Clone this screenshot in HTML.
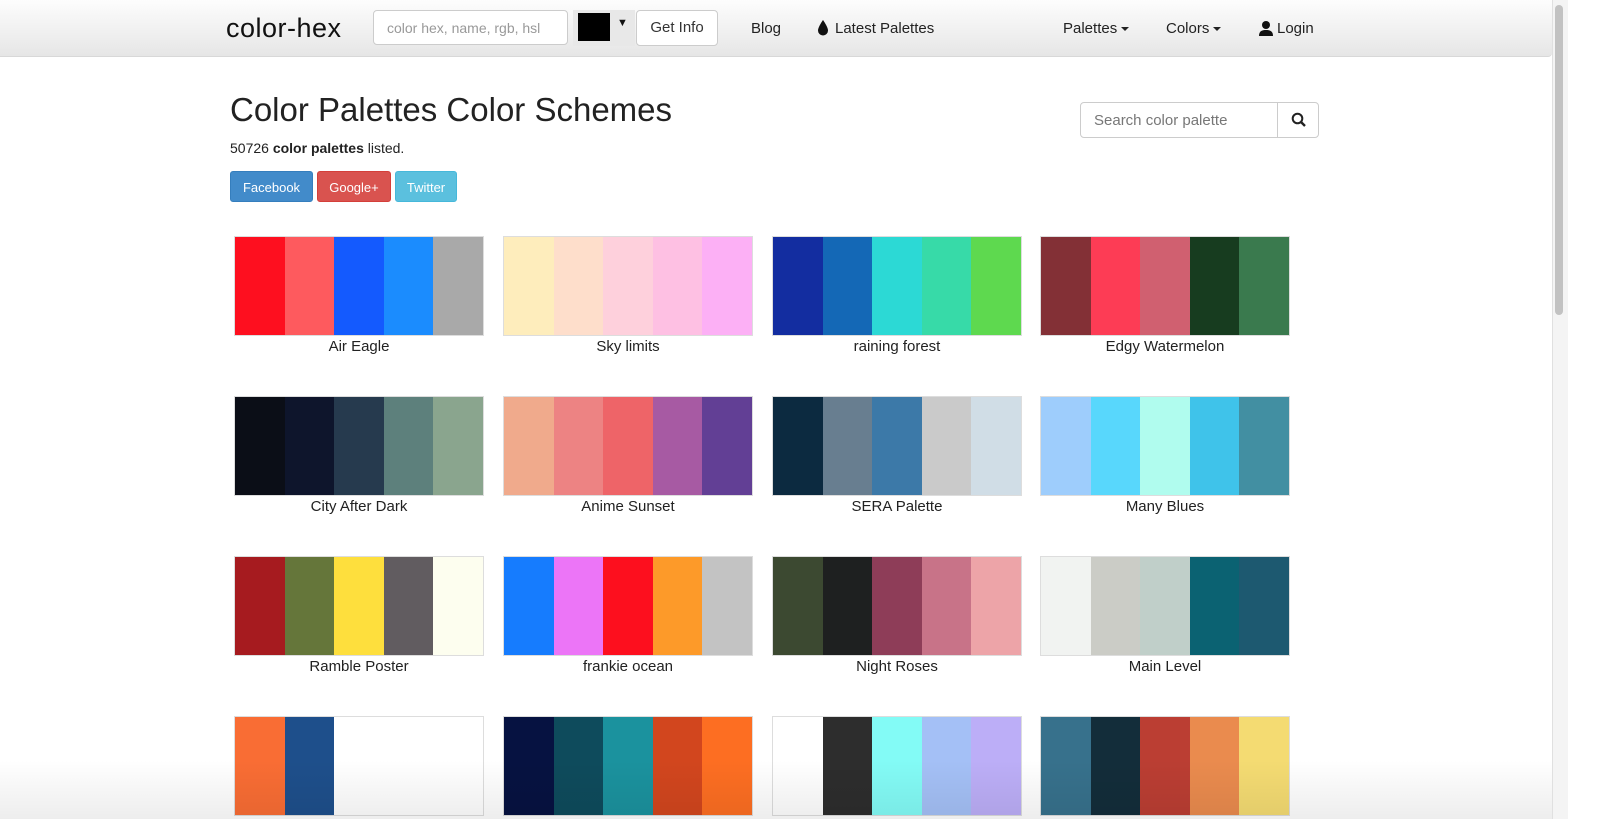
<!DOCTYPE html><html><head><meta charset="utf-8"><style>
body{margin:0;width:1600px;height:819px;overflow:hidden;background:#fff;font-family:"Liberation Sans",sans-serif;color:#333;position:relative}
.nav{position:absolute;left:0;top:0;width:1552px;height:56px;background:linear-gradient(#fdfdfd,#e6e6e6);border-bottom:1px solid #d8d8d8;border-radius:0 0 4px 0}
.abs{position:absolute}
.logo{left:226px;top:13px;font-size:27px;color:#111;letter-spacing:0.5px}
.inp{left:373px;top:10px;width:195px;height:35px;border:1px solid #ccc;border-radius:4px;background:#fff;box-sizing:border-box;font-size:14px;color:#999;padding:9px 13px}
.sw{left:578px;top:13px;width:32px;height:28px;background:#000}
.btn{left:636px;top:10px;width:82px;height:36px;border:1px solid #ccc;border-radius:4px;background:#fff;box-sizing:border-box;font-size:15px;color:#333;text-align:center;line-height:34px}
.nl{font-size:15px;color:#222;top:20px}
.car{display:inline-block;width:0;height:0;border-left:4px solid transparent;border-right:4px solid transparent;border-top:4px solid #222;vertical-align:middle;margin-left:4px}
.scroll{left:1552px;top:0;width:16px;height:819px;background:#f4f4f4;border-left:1px solid #e0e0e0}
.thumb{left:1555px;top:5px;width:8px;height:310px;background:#c2c2c2;border-radius:4px}
.edge{left:1568px;top:0;width:32px;height:819px;background:#fff}
h1{position:absolute;left:230px;top:91px;margin:0;font-weight:300;font-size:33px;color:#222}
.cnt{left:230px;top:140px;font-size:14px;color:#222}
.sb{top:171px;height:31px;border-radius:3px;color:#fff;font-size:13px;line-height:31px;text-align:center;box-sizing:border-box}
.search{left:1080px;top:102px;width:239px;height:36px;border:1px solid #ccc;border-radius:4px;box-sizing:border-box;font-size:15px;color:#777}
.pal{position:absolute;width:248px;height:98px;display:flex;outline:1px solid #ddd}
.pal div{flex:1}
.lab{position:absolute;width:248px;text-align:center;font-size:15px;color:#222}
</style></head><body>
<div class="nav"></div>
<div class="abs logo">color-hex</div>
<div class="abs inp">color hex, name, rgb, hsl</div>
<div class="abs" style="left:573px;top:10px;width:62px;height:36px;background:#e8e8e8"></div>
<div class="abs sw"></div>
<div class="abs" style="left:617px;top:17px;font-size:11px;color:#111">▼</div>
<div class="abs btn">Get Info</div>
<div class="abs nl" style="left:751px">Blog</div>
<svg class="abs" style="left:817px;top:20px" width="12" height="16" viewBox="0 0 12 16"><path d="M6 0C6 0 1 7 1 10.5a5 5 0 0 0 10 0C11 7 6 0 6 0z" fill="#111"/></svg>
<div class="abs nl" style="left:835px">Latest Palettes</div>
<div class="abs nl" style="left:1063px">Palettes<span class="car"></span></div>
<div class="abs nl" style="left:1166px">Colors<span class="car"></span></div>
<svg class="abs" style="left:1258px;top:20px" width="16" height="16" viewBox="0 0 16 16"><circle cx="8" cy="5" r="4" fill="#111"/><path d="M1 16c0-5 3-6 7-6s7 1 7 6z" fill="#111"/></svg>
<div class="abs nl" style="left:1277px">Login</div>
<div class="abs scroll"></div><div class="abs thumb"></div><div class="abs edge"></div>
<h1>Color Palettes Color Schemes</h1>
<div class="abs cnt">50726 <b>color palettes</b> listed.</div>
<div class="abs sb" style="left:230px;width:83px;background:#428bca;border:1px solid #357ebd">Facebook</div>
<div class="abs sb" style="left:317px;width:74px;background:#d9534f;border:1px solid #d43f3a">Google+</div>
<div class="abs sb" style="left:395px;width:62px;background:#5bc0de;border:1px solid #46b8da">Twitter</div>
<div class="abs search"><span style="position:absolute;left:13px;top:9px">Search color palette</span><div style="position:absolute;left:196px;top:0;width:1px;height:34px;background:#ccc"></div>
<svg style="position:absolute;left:210px;top:9px" width="16" height="16" viewBox="0 0 16 16"><circle cx="6.5" cy="6.5" r="4.8" fill="none" stroke="#222" stroke-width="2"/><path d="M10 10l4 4" stroke="#222" stroke-width="2.4"/></svg></div>

<div class="pal" style="left:235px;top:237px"><div style="background:#fe0f1f"></div><div style="background:#fe5a5e"></div><div style="background:#145afe"></div><div style="background:#1b8cfe"></div><div style="background:#a9a9a9"></div></div>
<div class="lab" style="left:235px;top:338px">Air Eagle</div>
<div class="pal" style="left:504px;top:237px"><div style="background:#feedbc"></div><div style="background:#fedecb"></div><div style="background:#fed0dc"></div><div style="background:#fec0e3"></div><div style="background:#fcb0f5"></div></div>
<div class="lab" style="left:504px;top:338px">Sky limits</div>
<div class="pal" style="left:773px;top:237px"><div style="background:#132da0"></div><div style="background:#1468b6"></div><div style="background:#2cd9d5"></div><div style="background:#37daa8"></div><div style="background:#5ed94f"></div></div>
<div class="lab" style="left:773px;top:338px">raining forest</div>
<div class="pal" style="left:1041px;top:237px"><div style="background:#833036"></div><div style="background:#fd3c55"></div><div style="background:#d06070"></div><div style="background:#173c1f"></div><div style="background:#3a7a4e"></div></div>
<div class="lab" style="left:1041px;top:338px">Edgy Watermelon</div>

<div class="pal" style="left:235px;top:397px"><div style="background:#0b0e17"></div><div style="background:#0e152c"></div><div style="background:#263a4e"></div><div style="background:#5d807c"></div><div style="background:#8aa58e"></div></div>
<div class="lab" style="left:235px;top:498px">City After Dark</div>
<div class="pal" style="left:504px;top:397px"><div style="background:#f0aa8c"></div><div style="background:#ed8383"></div><div style="background:#ee6468"></div><div style="background:#a75aa3"></div><div style="background:#623f95"></div></div>
<div class="lab" style="left:504px;top:498px">Anime Sunset</div>
<div class="pal" style="left:773px;top:397px"><div style="background:#0c2a40"></div><div style="background:#687e90"></div><div style="background:#3c79a8"></div><div style="background:#cacaca"></div><div style="background:#d0dde6"></div></div>
<div class="lab" style="left:773px;top:498px">SERA Palette</div>
<div class="pal" style="left:1041px;top:397px"><div style="background:#9ecdfc"></div><div style="background:#58d7fc"></div><div style="background:#b0fcee"></div><div style="background:#3fc3ea"></div><div style="background:#428fa2"></div></div>
<div class="lab" style="left:1041px;top:498px">Many Blues</div>

<div class="pal" style="left:235px;top:557px"><div style="background:#a61b1f"></div><div style="background:#65763a"></div><div style="background:#fedf3d"></div><div style="background:#615c60"></div><div style="background:#fdfeef"></div></div>
<div class="lab" style="left:235px;top:658px">Ramble Poster</div>
<div class="pal" style="left:504px;top:557px"><div style="background:#167cfe"></div><div style="background:#ec75f7"></div><div style="background:#fd0f1e"></div><div style="background:#fd9a29"></div><div style="background:#c3c3c3"></div></div>
<div class="lab" style="left:504px;top:658px">frankie ocean</div>
<div class="pal" style="left:773px;top:557px"><div style="background:#3c4931"></div><div style="background:#1e2020"></div><div style="background:#8e3d58"></div><div style="background:#c87388"></div><div style="background:#eda4a8"></div></div>
<div class="lab" style="left:773px;top:658px">Night Roses</div>
<div class="pal" style="left:1041px;top:557px"><div style="background:#f1f3f1"></div><div style="background:#cbccc6"></div><div style="background:#c0cfc9"></div><div style="background:#0b6272"></div><div style="background:#1d5970"></div></div>
<div class="lab" style="left:1041px;top:658px">Main Level</div>

<div class="pal" style="left:235px;top:717px"><div style="background:#f96d34"></div><div style="background:#1e4f8b"></div><div style="background:#fff;flex:3"></div></div>
<div class="pal" style="left:504px;top:717px"><div style="background:#061241"></div><div style="background:#0e4b5c"></div><div style="background:#1b929e"></div><div style="background:#d2461e"></div><div style="background:#fd6e22"></div></div>
<div class="pal" style="left:773px;top:717px"><div style="background:#fff"></div><div style="background:#2d2d2d"></div><div style="background:#83fbf6"></div><div style="background:#a4c0f6"></div><div style="background:#bcaef7"></div></div>
<div class="pal" style="left:1041px;top:717px"><div style="background:#37718c"></div><div style="background:#132d3a"></div><div style="background:#bb3e33"></div><div style="background:#ea8b4e"></div><div style="background:#f4db72"></div></div>
<div class="abs" style="left:0;top:760px;width:1552px;height:59px;background:linear-gradient(rgba(0,0,0,0),rgba(0,0,0,0.07))"></div>
</body></html>
